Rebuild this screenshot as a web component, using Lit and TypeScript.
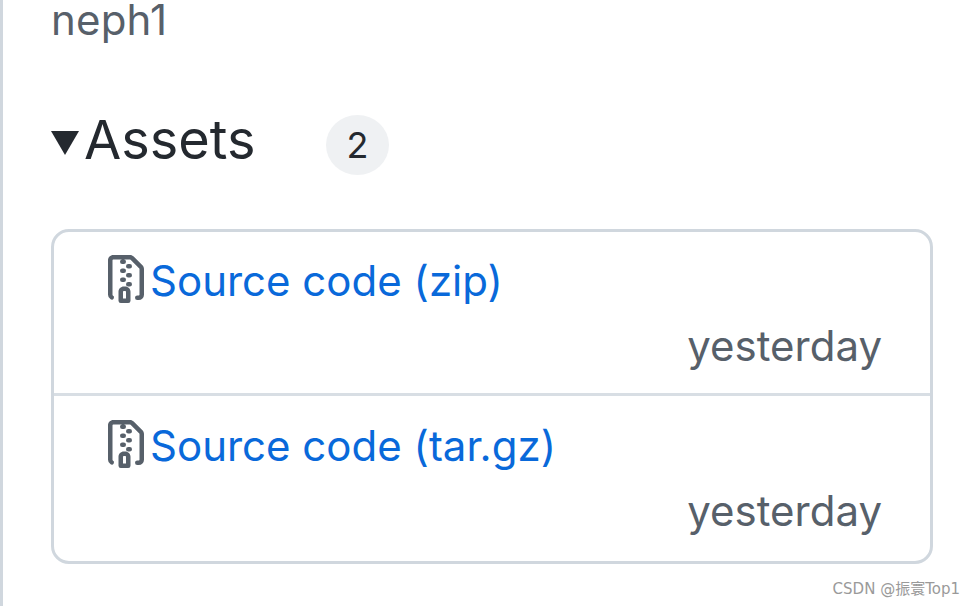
import { LitElement, html, css, svg } from "lit";
import { customElement } from "lit/decorators.js";

const ZIP = svg`<path fill-rule="evenodd" d="M3.5 1.75v11.5c0 .09.048.173.126.217a.75.75 0 0 1-.752 1.298A1.748 1.748 0 0 1 2 13.25V1.75C2 .784 2.784 0 3.75 0h5.586c.464 0 .909.185 1.237.513l2.914 2.914c.329.328.513.773.513 1.237v8.586A1.75 1.75 0 0 1 12.25 15h-.5a.75.75 0 0 1 0-1.5h.5a.25.25 0 0 0 .25-.25V4.664a.25.25 0 0 0-.073-.177L9.513 1.573a.25.25 0 0 0-.177-.073H7.25a.75.75 0 0 1 0 1.5h-.5a.75.75 0 0 1 0-1.5h-3a.25.25 0 0 0-.25.25Zm3.75 8.75h.5c.966 0 1.75.784 1.75 1.75v3a.75.75 0 0 1-.75.75h-2.5a.75.75 0 0 1-.75-.75v-3c0-.966.784-1.75 1.75-1.75ZM6 5.25a.75.75 0 0 1 .75-.75h.5a.75.75 0 0 1 0 1.5h-.5A.75.75 0 0 1 6 5.25Zm.75 2.25h.5a.75.75 0 0 1 0 1.5h-.5a.75.75 0 0 1 0-1.5ZM8 6.75A.75.75 0 0 1 8.75 6h.5a.75.75 0 0 1 0 1.5h-.5A.75.75 0 0 1 8 6.75ZM8.75 3h.5a.75.75 0 0 1 0 1.5h-.5a.75.75 0 0 1 0-1.5ZM8 9.75A.75.75 0 0 1 8.75 9h.5a.75.75 0 0 1 0 1.5h-.5A.75.75 0 0 1 8 9.75Zm-1 2.5v2.25h1v-2.25a.25.25 0 0 0-.25-.25h-.5a.25.25 0 0 0-.25.25Z"/>`;

@customElement("app-root")
export class AppRoot extends LitElement {
  static styles = css`
    :host {
      display: block;
      position: relative;
      width: 975px;
      height: 606px;
      overflow: hidden;
      background: #fff;
      font-family: Inter, "Noto Sans CJK SC", sans-serif;
    }
    .page {
      box-sizing: border-box;
      height: 606px;
      width: 975px;
      border-left: 3px solid #d0d7de;
      padding: 0 42px 0 48px;
      display: flex;
      flex-direction: column;
    }
    .author {
      height: 42px;
      line-height: 42px;
      font-size: 42px;
      letter-spacing: 0.2px;
      color: #57606a;
      margin-top: -1px;
    }
    .head {
      display: flex;
      align-items: center;
      margin-top: 74px;
      height: 60px;
    }
    .tri {
      width: 28px;
      height: 24px;
      fill: #24292f;
      flex: none;
      margin-top: -4px;
    }
    .title {
      font-size: 54px;
      line-height: 60px;
      color: #24292f;
      margin-left: 5px;
      margin-top: -10px;
      width: 242px;
    }
    .badge {
      width: 63px;
      height: 60px;
      border-radius: 50%;
      background: #eff1f3;
      color: #24292f;
      font-size: 36px;
      display: flex;
      align-items: center;
      justify-content: center;
    }
    .box {
      margin-top: 54px;
      width: 882px;
      box-sizing: border-box;
      border: 3px solid #d0d7de;
      border-radius: 18px;
      display: flex;
      flex-direction: column;
    }
    .row {
      height: 161px;
      box-sizing: border-box;
      padding: 23px 48px 0;
      display: flex;
      flex-direction: column;
    }
    .row + .row {
      border-top: 3px solid #d8dee4;
      height: 168px;
      padding-top: 24px;
    }
    .name {
      display: flex;
      align-items: center;
      height: 48px;
    }
    .name svg {
      width: 48px;
      height: 48px;
      fill: #57606a;
      flex: none;
    }
    .link {
      font-size: 42px;
      line-height: 48px;
      color: #0969da;
      padding-top: 4px;
    }
    .date {
      font-size: 42px;
      line-height: 48px;
      color: #57606a;
      text-align: right;
      margin-top: 19px;
    }
    .mark {
      position: absolute;
      right: 15px;
      top: 580px;
      font-size: 15px;
      line-height: 18px;
      color: #9a9a9a;
      font-family: "DejaVu Sans", "Noto Sans CJK SC", sans-serif;
    }
  `;

  render() {
    const assets = ["Source code (zip)", "Source code (tar.gz)"];
    return html`
      <div class="page">
        <div class="author">neph1</div>
        <div class="head">
          <svg class="tri" viewBox="0 0 28 24"><path d="M0 0H28L14 24Z" /></svg>
          <div class="title">Assets</div>
          <div class="badge">2</div>
        </div>
        <div class="box">
          ${assets.map(
            (a) => html`
              <div class="row">
                <div class="name">
                  <svg viewBox="0 0 16 16">${ZIP}</svg>
                  <span class="link">${a}</span>
                </div>
                <div class="date">yesterday</div>
              </div>
            `
          )}
        </div>
      </div>
      <div class="mark">CSDN @振寰Top1</div>
    `;
  }
}
